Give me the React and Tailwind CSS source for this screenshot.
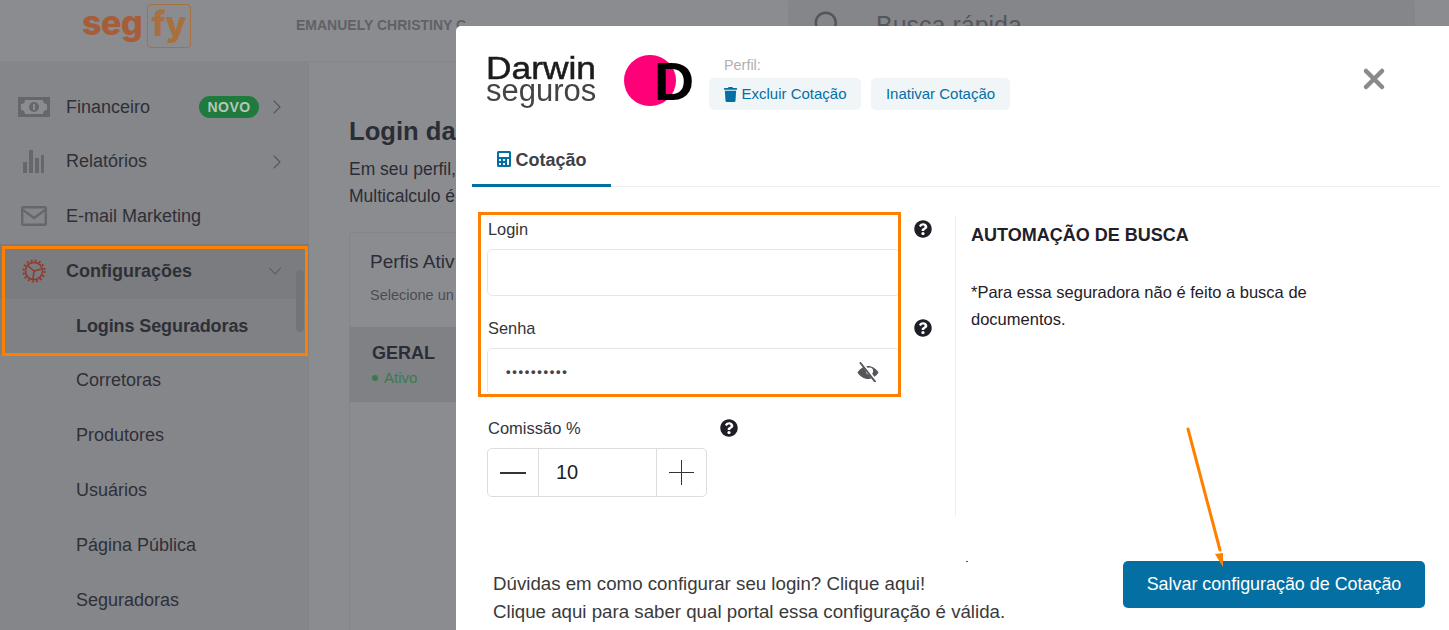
import React from "react";
import { ChevronRight, ChevronDown, Search, X } from "lucide-react";
import { FaTrash, FaCalculator, FaQuestionCircle } from "react-icons/fa";

const font = "font-['Liberation_Sans',Arial,sans-serif]";

const MoneyIcon = () => (
  <svg width="32" height="20" viewBox="0 0 32 20" className="shrink-0">
    <rect width="32" height="20" fill="#66676b" />
    <path d="M7 3h18a4 4 0 0 0 4 4v6a4 4 0 0 0-4 4H7a4 4 0 0 0-4-4V7a4 4 0 0 0 4-4z" fill="#8b8c90" />
    <circle cx="16" cy="10" r="5" fill="#66676b" />
    <rect x="15" y="7" width="2" height="6" fill="#8b8c90" />
  </svg>
);

const BarsIcon = () => (
  <svg width="22" height="23" viewBox="0 0 22 23" className="shrink-0 ml-[5px]">
    <rect x="0" y="12" width="4" height="11" fill="#66676b" />
    <rect x="6" y="0" width="4" height="23" fill="#66676b" />
    <rect x="12" y="8" width="4" height="15" fill="#66676b" />
    <rect x="18" y="5" width="3" height="18" fill="#66676b" />
  </svg>
);

const MailIcon = () => (
  <svg width="26" height="20" viewBox="0 0 26 20" fill="none" stroke="#66676b" strokeWidth="2.4" className="shrink-0 ml-[3px]">
    <rect x="1.2" y="1.2" width="23.6" height="17.6" rx="1.5" />
    <path d="M2 4l11 8 11-8" />
  </svg>
);

const GearIcon = () => (
  <svg width="24" height="24" viewBox="0 0 24 24" fill="none" stroke="#8f3c2e" strokeWidth="1.6" className="shrink-0">
    <circle cx="12" cy="12" r="8.6" />
    <circle cx="12" cy="12" r="10.6" strokeWidth="2" strokeDasharray="2 2.2" />
    <path d="M12 12L5.5 6.5M12 12l7.5-2M12 12l-1 8.5" />
  </svg>
);

const EyeOff = () => (
  <svg width="22" height="20" viewBox="0 0 22 20" className="ml-auto shrink-0">
    <path d="M0.5 10.5C3 6.5 7 4 11 4s8 2.5 10.5 6.5C19 14.5 15 17 11 17s-8-2.5-10.5-6.5z" fill="#55565b" />
    <circle cx="12.5" cy="9" r="3.6" fill="#ffffff" />
    <path d="M4.5 0.5l14 18.5" stroke="#ffffff" strokeWidth="3.4" />
    <path d="M3.5 1l14.5 18.5" stroke="#55565b" strokeWidth="2" strokeLinecap="round" />
  </svg>
);

const SideItem = ({ icon, label, badge, arrow }) => (
  <div className="h-[54.5px] flex items-center pl-[18px] pr-[20px] text-[18px] text-[#2e3037]">
    <span className="w-[48px] flex justify-start">{icon}</span>
    <span className="flex-1">{label}</span>
    {badge && (
      <span className="mr-[6px] h-[22px] w-[60px] rounded-full bg-[#1f7a3d] text-[#b5c6ba] text-[14px] font-bold tracking-[0.5px] flex items-center justify-center">
        {badge}
      </span>
    )}
    {arrow && <ChevronRight size={24} color="#55565b" strokeWidth={1.1} />}
  </div>
);

const SubItem = ({ label }) => (
  <div className="h-[54.8px] flex items-center pl-[76px] text-[18px] text-[#2e3037]">{label}</div>
);

const Help = () => <FaQuestionCircle size={18} color="#1d1e26" className="shrink-0" />;

const Logos = () => (
  <div className="flex items-start">
    <div className="w-[112px] flex flex-col items-start blur-[0.4px]">
      <span className="mt-[1px] text-[31px] leading-[26px] text-[#1c1c1c] origin-left scale-x-[1.14] [-webkit-text-stroke:0.5px_#1c1c1c]">Darwin</span>
      <span className="mt-[2px] text-[31px] leading-[14px] text-[#444]">seguros</span>
    </div>
    <div className="relative w-[85px] h-[51px] ml-[26px] blur-[0.4px]">
      <div className="absolute left-0 top-0 w-[52px] h-[51px] rounded-full bg-[#ff0078]" />
      <span className="absolute left-[30px] top-0 text-[53px] leading-[53px] font-bold text-black origin-left scale-x-[1.05]">D</span>
    </div>
  </div>
);

const Field = ({ label, password }) => (
  <div>
    <div className="flex items-center justify-between w-[445px] h-[20px] pl-[1px] text-[16.4px] text-[#33343a]">
      {label}
      <Help />
    </div>
    <div className="mt-[10px] w-[413px] h-[47px] border border-[#e6e6e6] rounded-[5px] flex items-center pl-[18px] pr-[20px]">
      {password && (
        <>
          <span className="text-[#444] text-[13px] tracking-[1.7px] font-bold leading-none">••••••••••</span>
          <EyeOff />
        </>
      )}
    </div>
  </div>
);

const App = () => {
  return (
    <div className={`relative w-[1449px] h-[630px] overflow-hidden bg-[#8b8c90] ${font}`}>
      <header className="h-[62px] flex items-start border-b border-[#85868a]">
        <div className="w-[296px] shrink-0 pl-[82px] pt-[4px] flex items-start font-['Inter',sans-serif]">
          <span className="w-[60px] -mt-[3px] text-[34px] font-extrabold text-[#a65d38] leading-[44px] tracking-[-0.5px]">seg</span>
          <span className="ml-[5px] w-[44px] h-[44px] border border-[#a8703f] rounded-[4px] text-[34px] font-extrabold text-[#a8703f] leading-[38px] text-center">fy</span>
        </div>
        <span className="w-[492px] shrink-0 mt-[17px] text-[14px] leading-[16px] font-bold text-[#606166] whitespace-nowrap">EMANUELY CHRISTINY C</span>
        <div className="w-[627px] h-[52px] bg-[#858689] rounded flex items-center pl-[24px] text-[25px] text-[#55565b]">
          <Search size={30} strokeWidth={2} color="#55565b" className="-mt-[4px]" />
          <span className="ml-[34px]">Busca rápida</span>
        </div>
      </header>

      <div className="flex">
        <aside className="relative w-[309px] h-[568px] bg-[#85868a] pt-[18px] overflow-hidden">
          <SideItem icon={<MoneyIcon />} label="Financeiro" badge="NOVO" arrow />
          <SideItem icon={<BarsIcon />} label="Relatórios" arrow />
          <SideItem icon={<MailIcon />} label="E-mail Marketing" />
          <div className="bg-[#7b7c80]">
            <div className="h-[55px] flex items-center pl-[22px] pr-[23px] text-[18px] font-bold text-[#2e3037]">
              <span className="w-[44px]"><GearIcon /></span>
              <span className="flex-1">Configurações</span>
              <ChevronDown size={22} color="#55565b" strokeWidth={1.1} />
            </div>
            <div className="h-[55px] flex items-center pl-[76px] text-[18px] font-bold tracking-[-0.1px] text-[#2e3037] bg-[#808185]">
              Logins Seguradoras
            </div>
          </div>
          <SubItem label="Corretoras" />
          <SubItem label="Produtores" />
          <SubItem label="Usuários" />
          <SubItem label="Página Pública" />
          <SubItem label="Seguradoras" />
          <div className="absolute left-[296px] top-[208px] w-[8px] h-[62px] rounded-full bg-[#737478]" />
        </aside>

        <main className="w-[147px] overflow-hidden pl-[40px] pt-[55px] text-[#2b2d36]">
          <h1 className="text-[25.6px] leading-[28px] font-bold whitespace-nowrap">Login da</h1>
          <p className="mt-[11px] text-[17.5px] leading-[27px] whitespace-nowrap">Em seu perfil,</p>
          <p className="text-[17.5px] leading-[27px] whitespace-nowrap">Multicalculo é</p>
          <div className="mt-[22px] h-[398px] border-l border-t border-[#848589] rounded-tl">
            <div className="h-[94px] pl-[20px] pt-[16px]">
              <div className="text-[19px] leading-[26px] whitespace-nowrap">Perfis Ativ</div>
              <div className="mt-[10px] text-[14.5px] leading-[20px] text-[#4b4c52] whitespace-nowrap">Selecione un</div>
            </div>
            <div className="h-[75px] bg-[#808185] pl-[22px] pt-[15px]">
              <div className="text-[18px] font-bold leading-[22px]">GERAL</div>
              <div className="mt-[4px] text-[15px] leading-[20px] text-[#3a7a4e] flex items-center gap-[6px]">
                <span className="w-[6px] h-[6px] rounded-full bg-[#3a7a4e]" />Ativo
              </div>
            </div>
          </div>
        </main>
      </div>

      {/* modal */}
      <div className="absolute left-[456px] top-[26px] w-[993px] h-[604px] bg-white rounded-tl-[5px] pt-[29px]">
        <div className="h-[53px] flex items-start pl-[30px]">
          <Logos />
          <div>
            <div className="pl-[15px] text-[14.4px] leading-[20px] text-[#b0b0b0]">Perfil:</div>
            <div className="mt-[3px] flex gap-[10px]">
              <span className="h-[32px] w-[152px] rounded-[5px] bg-[#f0f5f8] text-[#046fa3] text-[15px] flex items-center justify-center gap-[3px]">
                <FaTrash size={15} /> Excluir Cotação
              </span>
              <span className="h-[32px] w-[139px] rounded-[5px] bg-[#f0f5f8] text-[#046fa3] text-[15px] flex items-center justify-center">
                Inativar Cotação
              </span>
            </div>
          </div>
          <X size={32} strokeWidth={3.4} color="#8a8a8a" className="ml-auto mr-[59px] mt-[8px]" />
        </div>

        <div className="mt-[42px] ml-[16px] mr-[9px] h-[37px] border-b border-[#eeeeee]">
          <div className="w-[139px] h-[37px] border-b-[3px] border-[#046fa3] flex items-start justify-center gap-[3px] text-[18px] font-bold text-[#3f4046] leading-[20px]">
            <FaCalculator size={16} color="#046fa3" className="mt-[1px]" /> Cotação
          </div>
        </div>

        <div className="flex mt-[29px] pl-[31px] h-[300px]">
          <div className="w-[469px] border-r border-[#eeeeee] pt-[3px]">
            <Field label="Login" />
            <div className="mt-[22px]">
              <Field label="Senha" password />
            </div>
            <div className="mt-[23px]">
              <div className="flex items-center w-[251px] justify-between h-[20px] pl-[1px] text-[16.5px] text-[#33343a]">
                Comissão %
                <Help />
              </div>
              <div className="mt-[10px] w-[220px] h-[49px] border border-[#dddddd] rounded-[5px] flex items-center text-[#1d1e26]">
                <div className="w-[51px] h-full border-r border-[#dddddd] flex items-center justify-center">
                  <span className="w-[26px] h-[2px] bg-[#333]" />
                </div>
                <div className="w-[118px] h-full border-r border-[#dddddd] pl-[17px] pb-[2px] flex items-center text-[20px]">10</div>
                <div className="relative flex-1 h-full flex items-center justify-center">
                  <span className="w-[25px] h-[1.5px] bg-[#333]" />
                  <span className="absolute w-[1.5px] h-[25px] bg-[#333]" />
                </div>
              </div>
            </div>
          </div>
          <div className="pl-[15px] pt-[9px] text-[#1f2028]">
            <div className="text-[18px] font-bold leading-[20px]">AUTOMAÇÃO DE BUSCA</div>
            <p className="mt-[34px] text-[16.5px] leading-[27px] w-[430px]">
              *Para essa seguradora não é feito a busca de documentos.
            </p>
          </div>
        </div>

        <div className="flex justify-between items-start pl-[37px] pr-[24px] mt-[45px]">
          <div className="text-[18.7px] leading-[28px] text-[#3a3a3a] mt-[9px] whitespace-nowrap">
            <div>Dúvidas em como configurar seu login? Clique aqui!</div>
            <div>Clique aqui para saber qual portal essa configuração é válida.</div>
          </div>
          <button className="h-[47px] w-[302px] rounded-[5px] bg-[#046fa3] text-white text-[17.9px]">
            Salvar configuração de Cotação
          </button>
        </div>
      </div>

      {/* annotations drawn over the print */}
      <div className="absolute left-[2px] top-[246px] w-[306px] h-[110px] border-[3px] border-[#ff8000]" />
      <div className="absolute left-[478px] top-[212px] w-[423px] h-[185px] border-[3px] border-[#ff8000]" />
      <svg className="absolute left-[1180px] top-[425px]" width="50" height="145" viewBox="0 0 50 145">
        <path d="M8 4L40 125" stroke="#ff8000" strokeWidth="3" strokeLinecap="round" />
        <path d="M35 129L43 128L43 142z" fill="#ff8000" />
      </svg>
      <span className="absolute left-[966px] top-[561px] w-[2px] h-[1px] bg-[#555]" />
    </div>
  );
};

export default App;
